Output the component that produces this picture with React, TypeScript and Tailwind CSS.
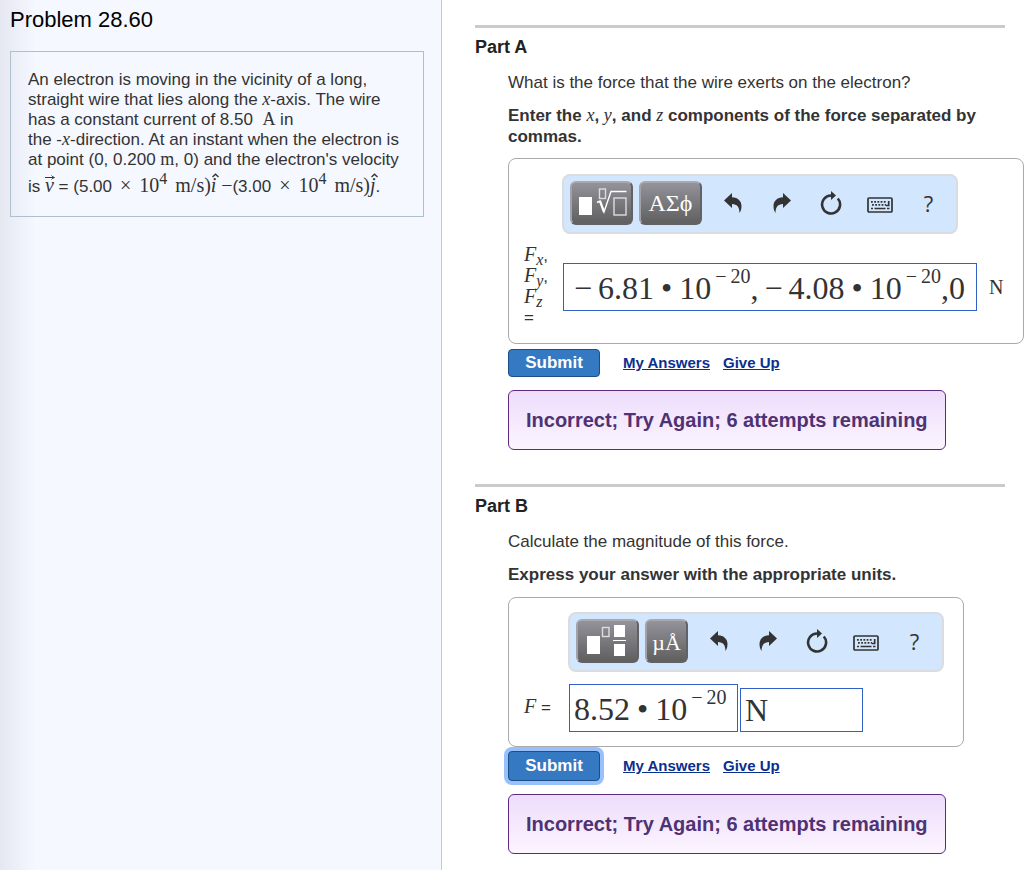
import type { ReactNode } from 'react';
import clsx from 'clsx';

const serif = "font-['Liberation_Serif',serif]";

// Inline math in the running text
function Var({ children }: { children: ReactNode }) {
  return <i className={clsx(serif, 'text-lg leading-4 font-normal')}>{children}</i>;
}

function Unit({ children }: { children: ReactNode }) {
  return <span className={clsx(serif, 'text-lg leading-4')}>{children}</span>;
}

function Accent({ letter, kind }: { letter: string; kind: 'arrow' | 'hat' }) {
  return (
    <span className="relative inline-block leading-5">
      <i className={clsx(serif, 'text-xl leading-4')}>{letter}</i>
      <svg
        aria-hidden="true"
        viewBox="0 0 10 5"
        fill="none"
        stroke="currentColor"
        className={clsx('absolute left-0 h-[5px] w-[10px]', kind === 'arrow' ? '-top-0.5' : '-top-1')}
      >
        {kind === 'arrow' ? (
          <path d="M0 2.5H9M6.5 .5Q7.5 2 9.5 2.5Q7.5 3 6.5 4.5" />
        ) : (
          <path d="M1.5 4L4.5 1.2L7.5 4" strokeWidth="1.3" />
        )}
      </svg>
    </span>
  );
}

function PowerOfTen() {
  return (
    <span className={clsx(serif, 'text-xl leading-4')}>
      <span className="mx-2">×</span>
      10
      <sup className="mr-2 text-base leading-0">4</sup>
      m/s)
    </span>
  );
}

// Pieces of an expression inside an answer box
function Minus() {
  return <span className="mx-1.5">−</span>;
}

function Scientific({ mantissa, exponent }: { mantissa: string; exponent: string }) {
  return (
    <>
      <span>{mantissa}</span>
      <span className="mx-[7px]">•</span>
      <span>10</span>
      <span className="ml-1 -translate-y-4 text-xl leading-none">
        <span className="mr-1">−</span>
        {exponent}
      </span>
    </>
  );
}

function MathField({ label, className, children }: { label: string; className?: string; children: ReactNode }) {
  return (
    <div
      role="textbox"
      aria-label={label}
      tabIndex={0}
      className={clsx(
        serif,
        'flex h-12 items-baseline border border-[#3160c6] bg-white text-[32px] leading-[48px] whitespace-nowrap text-[#333]',
        className,
      )}
    >
      {children}
    </div>
  );
}

function RootTemplateIcon() {
  return (
    <svg aria-hidden="true" viewBox="0 0 50 30" fill="none" stroke="#fff" className="h-[30px] w-[50px]">
      <rect x="2" y="9" width="13" height="18" fill="#fff" stroke="none" />
      <rect x="22.5" y="1" width="6" height="9.5" stroke="#ddd" strokeWidth="1.4" />
      <path d="M20 14.5L23 13L27 24L34 3.5H49.5" strokeWidth="1.4" />
      <path d="M23 13L27 24" strokeWidth="2.2" />
      <rect x="37" y="10" width="12" height="17" stroke="#ddd" strokeWidth="1.4" />
    </svg>
  );
}

function FractionTemplateIcon() {
  return (
    <svg aria-hidden="true" viewBox="0 0 42 34" fill="none" className="h-[34px] w-[42px]">
      <rect x="0" y="12" width="13" height="18" fill="#fff" />
      <rect x="15.5" y="3.5" width="6.5" height="9" stroke="#ddd" strokeWidth="1.4" />
      <rect x="27" y="1" width="11" height="12" fill="#fff" />
      <path d="M26 16.5H39" stroke="#fff" />
      <rect x="27" y="20" width="11" height="12" fill="#fff" />
    </svg>
  );
}

function UndoIcon({ flipped }: { flipped?: boolean }) {
  return (
    <svg aria-hidden="true" viewBox="0 0 18 20" fill="currentColor" className={clsx('h-5 w-[18px]', flipped && '-scale-x-100')}>
      <path d="M0 7.5L8 0V4.2C14 4.5 17.5 8 17.5 13C17.5 16 16.8 18 15.5 20C15.5 14 13 11.2 8 11V15Z" />
    </svg>
  );
}

function ResetIcon() {
  return (
    <svg aria-hidden="true" viewBox="0 0 22 24" fill="none" className="h-6 w-[22px]">
      <path d="M11 4.5A9 9 0 1 0 17.8 7.5" stroke="currentColor" strokeWidth="2.6" />
      <path d="M11 0L16 4.5L11 9Z" fill="currentColor" />
    </svg>
  );
}

function KeyboardIcon() {
  return (
    <svg aria-hidden="true" viewBox="0 0 26 16" fill="none" stroke="currentColor" className="mt-1 h-4 w-[26px]">
      <rect x="1" y="1" width="24" height="14" rx="1" strokeWidth="1.7" />
      <path d="M4 4.8H20M5 7.8H19" strokeWidth="1.7" strokeDasharray="1.8 1.4" />
      <path d="M21.7 4V8.5H19" strokeWidth="1.7" />
      <path d="M4 11.5H6M7.5 11.5H18.5M20 11.5H22.5" strokeWidth="1.7" />
    </svg>
  );
}

const tools = [
  { name: 'Undo', icon: <UndoIcon /> },
  { name: 'Redo', icon: <UndoIcon flipped /> },
  { name: 'Reset', icon: <ResetIcon /> },
  { name: 'Keyboard shortcuts', icon: <KeyboardIcon /> },
  { name: 'Help', icon: <span className="font-['Open_Sans',sans-serif] text-[22px] leading-5">?</span> },
];

function PaletteButton({ label, className, children }: { label: string; className: string; children: ReactNode }) {
  return (
    <button
      type="button"
      aria-label={label}
      className={clsx(
        serif,
        'flex h-11 shrink-0 items-center justify-center rounded-md border-2 border-t-[#a9a9ad] border-r-[#626266] border-b-[#626266] border-l-[#a2a2a8] bg-linear-to-b from-[#94929b] to-[#606060] text-white',
        className,
      )}
    >
      {children}
    </button>
  );
}

function Toolbar({ children }: { children: ReactNode }) {
  return (
    <div className="flex h-[60px] w-fit items-center rounded-lg border-2 border-[#dadcdf] bg-[#d2e6fe] pr-[3px] pb-0.5 pl-1.5 text-[#333]">
      <div className="mr-1.5 flex gap-1.5">{children}</div>
      {tools.map((tool) => (
        <button key={tool.name} type="button" aria-label={tool.name} className="flex h-11 w-[49px] items-center justify-center">
          {tool.icon}
        </button>
      ))}
    </div>
  );
}

function Actions({ focused }: { focused?: boolean }) {
  return (
    <div className="flex items-center">
      <button
        type="submit"
        className={clsx(
          'w-[92px] rounded-sm border border-[#1c4f85] bg-[#3579c2] text-[17px] leading-6 font-bold text-white',
          focused ? 'h-[30px] ring-4 ring-[#98c1fb]' : 'h-7',
        )}
      >
        Submit
      </button>
      <a href="#answers" className="ml-[23px] text-[15px] font-bold text-[#0b2f8f] underline">
        My Answers
      </a>
      <a href="#give-up" className="ml-[13px] text-[15px] font-bold text-[#0b2f8f] underline">
        Give Up
      </a>
    </div>
  );
}

function Feedback() {
  return (
    <p
      role="status"
      className="mt-[13px] flex h-[60px] w-fit items-center rounded-md border border-[#5c2a80] bg-linear-to-b from-[#eddcfb] to-[#fcf5ff] px-[17px] text-xl font-bold text-[#4f3273]"
    >
      Incorrect; Try Again; 6 attempts remaining
    </p>
  );
}

function Part({ title, children }: { title: string; children: ReactNode }) {
  return (
    <section className="border-t-[3px] border-[#cbcbcb]">
      <h2 className="mt-[7px] text-lg leading-6 font-bold text-[#222]">{title}</h2>
      <form className="pl-[33px]" onSubmit={(e) => e.preventDefault()}>
        {children}
      </form>
    </section>
  );
}

export default function App() {
  return (
    <div className="flex min-h-screen bg-white font-['Liberation_Sans',Arial,sans-serif] text-[17px] leading-5 text-[#333]">
      <aside className="w-[442px] shrink-0 border-r border-[#bfcbdc] bg-[#f5f8ff] bg-linear-to-r from-[#e5e8f1] to-[#f5f8ff] to-[36px] pt-2 pr-[17px] pl-2.5">
        <h1 className="text-[22px] leading-6 text-black">Problem 28.60</h1>
        <div className="mt-[19px] border border-[#aebfce] px-[17px] pt-[18px] pb-[19px]">
          <p className="whitespace-nowrap">
            An electron is moving in the vicinity of a long,
            <br />
            straight wire that lies along the <Var>x</Var>-axis. The wire
            <br />
            has a constant current of 8.50&nbsp; <Unit>A</Unit> in
            <br />
            the -<Var>x</Var>-direction. At an instant when the electron is
            <br />
            at point (0, 0.200 <Unit>m</Unit>, 0) and the electron's velocity
          </p>
          <p className="mt-[7px] whitespace-nowrap">
            is <Accent letter="v" kind="arrow" /> = (5.00
            <PowerOfTen />
            <Accent letter="i" kind="hat" /> <span className={clsx(serif, 'text-xl leading-4')}>−</span>(3.00
            <PowerOfTen />
            <Accent letter="j" kind="hat" />.
          </p>
        </div>
      </aside>

      <main className="min-w-0 flex-1 pt-[25px] pr-[19px] pb-4 pl-[33px]">
        <Part title="Part A">
          <p className="mt-3.5">What is the force that the wire exerts on the electron?</p>
          <p className="mt-3 leading-[21px] font-bold">
            Enter the <Var>x</Var>, <Var>y</Var>, and <Var>z</Var> components of the force separated by commas.
          </p>
          <div className="mt-[11px] -mr-[19px] grid grid-cols-[39px_1fr] rounded-lg border border-[#aaa] pt-[15px] pb-[15px] pl-[15px]">
            <div className="col-start-2 -ml-px">
              <Toolbar>
                <PaletteButton label="Templates" className="w-[63px]">
                  <RootTemplateIcon />
                </PaletteButton>
                <PaletteButton label="Symbols" className="w-[63px] text-2xl">
                  ΑΣϕ
                </PaletteButton>
              </Toolbar>
            </div>
            <div className="mt-2.5">
              {['x', 'y', 'z'].map((axis) => (
                <div key={axis} className="h-[21px] leading-[21px]">
                  <i className={clsx(serif, 'text-xl leading-none')}>F</i>
                  <sub className={clsx(serif, 'text-base leading-none italic')}>{axis}</sub>
                  {axis !== 'z' && ','}
                </div>
              ))}
              <div className="h-[21px] leading-[21px]">=</div>
            </div>
            <div className="mt-[29px] flex items-start">
              <MathField label="Force components" className="w-[414px] pl-1">
                <Minus />
                <Scientific mantissa="6.81" exponent="20" />
                <span>,</span>
                <Minus />
                <Scientific mantissa="4.08" exponent="20" />
                <span>,0</span>
              </MathField>
              <span className={clsx(serif, 'ml-3 text-xl leading-[48px]')}>N</span>
            </div>
          </div>
          <div className="mt-[5px]">
            <Actions />
          </div>
          <Feedback />
        </Part>

        <div className="mt-[34px]">
          <Part title="Part B">
            <p className="mt-3.5">Calculate the magnitude of this force.</p>
            <p className="mt-3 leading-[21px] font-bold">Express your answer with the appropriate units.</p>
            <div className="mt-3 w-[456px] rounded-lg border border-[#aaa] pt-3.5 pb-3.5 pl-[15px]">
              <div className="ml-11">
                <Toolbar>
                  <PaletteButton label="Templates" className="w-[63px]">
                    <FractionTemplateIcon />
                  </PaletteButton>
                  <PaletteButton label="Units" className="w-[43px] pt-1 text-[22px]">
                    µÅ
                  </PaletteButton>
                </Toolbar>
              </div>
              <div className="mt-3 flex items-end">
                <span className="mb-3.5 w-[45px]">
                  <i className={clsx(serif, 'text-xl leading-4')}>F</i> =
                </span>
                <MathField label="Magnitude" className="w-[169px] pl-1">
                  <Scientific mantissa="8.52" exponent="20" />
                </MathField>
                <input
                  aria-label="Units"
                  defaultValue="N"
                  className={clsx(serif, 'ml-[2px] h-11 w-[123px] border border-[#3160c6] bg-white pl-1 text-[32px] text-[#333]')}
                />
              </div>
            </div>
            <div className="mt-1">
              <Actions focused />
            </div>
            <Feedback />
          </Part>
        </div>
      </main>
    </div>
  );
}
